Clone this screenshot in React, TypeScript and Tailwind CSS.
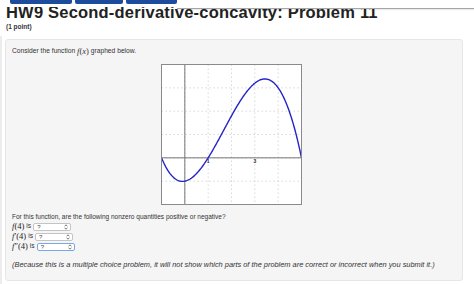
import React from "react";

function Graph() {
  const u = 140 / 6;
  const X = (x: number) => (x + 1) * u;
  const Y = (y: number) => (4 - y) * u;
  const f = (x: number) => -0.2 * (x * x - 1) * (x - 5);
  const pts: string[] = [];
  for (let i = 0; i <= 240; i++) {
    const x = -1 + (6 * i) / 240;
    pts.push(`${i === 0 ? "M" : "L"}${X(x).toFixed(2)},${Y(f(x)).toFixed(2)}`);
  }
  const grid = [1, 2, 3, 4, 5];
  return (
    <svg width="141" height="141" viewBox="-0.5 -0.5 141 141" className="block">
      <rect x="0" y="0" width="140" height="140" fill="#fff" />
      {grid.map((g) => (
        <line key={"v" + g} x1={g * u} y1={0} x2={g * u} y2={140} stroke="#cfcfcf" strokeWidth="0.8" strokeDasharray="1.5 2.5" />
      ))}
      {grid.map((g) => (
        <line key={"h" + g} x1={0} y1={g * u} x2={140} y2={g * u} stroke="#cfcfcf" strokeWidth="0.8" strokeDasharray="1.5 2.5" />
      ))}
      <line x1={X(0)} y1={0} x2={X(0)} y2={140} stroke="#777" strokeWidth="1" />
      <line x1={0} y1={Y(0)} x2={140} y2={Y(0)} stroke="#777" strokeWidth="1" />
      <text x={X(1)} y={Y(0) + 5.5} fontSize="5" fontWeight="bold" textAnchor="middle" fontFamily="Liberation Sans, sans-serif" fill="#333">1</text>
      <text x={X(3)} y={Y(0) + 5.5} fontSize="5" fontWeight="bold" textAnchor="middle" fontFamily="Liberation Sans, sans-serif" fill="#333">3</text>
      <path d={pts.join(" ")} fill="none" stroke="#2424c8" strokeWidth="1.4" />
      <rect x="0" y="0" width="140" height="140" fill="none" stroke="#8a8a8a" strokeWidth="1" />
    </svg>
  );
}

function Select({ focus = false }: { focus?: boolean }) {
  return (
    <span
      className={`inline-flex items-center justify-between h-[8px] w-[38px] bg-white rounded-[2px] pl-[3px] pr-[2px] ml-[2px] border ${
        focus ? "border-[#7aa7e6]" : "border-[#c4c4c4]"
      }`}
    >
      <span className="text-[6px] leading-none text-[#444] font-['Liberation_Sans',sans-serif]">?</span>
      <svg width="4" height="6" viewBox="0 0 4 6">
        <path d="M0.6 2.3 L2 0.8 L3.4 2.3" fill="none" stroke="#555" strokeWidth="0.8" />
        <path d="M0.6 3.7 L2 5.2 L3.4 3.7" fill="none" stroke="#555" strokeWidth="0.8" />
      </svg>
    </span>
  );
}

function MathRow({ label, focus = false }: { label: React.ReactNode; focus?: boolean }) {
  return (
    <div className="flex items-center h-[10px]">
      <span className="font-['Liberation_Serif',serif] text-[8.5px] leading-none text-[#222]">{label}</span>
      <span className="text-[6.7px] leading-none ml-[2px] text-[#333]">is</span>
      <Select focus={focus} />
    </div>
  );
}

export default function App() {
  return (
    <div className="relative w-[474px] h-[284px] overflow-hidden bg-white font-['Liberation_Sans',Arial,sans-serif] text-[#222]">
      {/* top nav overlay */}
      <div className="absolute left-0 top-0 w-full z-10 flex items-start">
        <div className="h-[7px] bg-white pl-[10px] flex gap-[3px] items-start">
          <div className="w-[62px] h-[4px] bg-[#1d4c9c] rounded-b-[2px]" />
          <div className="w-[48px] h-[4px] bg-[#1d4c9c] rounded-b-[2px]" />
          <div className="w-[51px] h-[4px] bg-[#1d4c9c] rounded-b-[2px]" />
        </div>
        <div className="flex-1 h-[9px] bg-white border-b-[1.5px] border-[#a5a5a5] shadow-[0_1px_1px_rgba(0,0,0,0.08)]" />
      </div>

      {/* left edge strip */}
      <div className="absolute left-0 top-[36px] w-[2px] h-[248px] bg-[#ececec]" />

      <div className="pl-[6px] pt-[3.5px]">
        <h1 className="text-[16.5px] leading-[16.5px] font-bold tracking-[0.2px] text-[#222] whitespace-nowrap">
          HW9 Second-derivative-concavity: Problem 11
        </h1>
        <div className="mt-[3px] text-[6.5px] leading-[7px] font-bold text-[#333]">(1 point)</div>
      </div>

      <div className="ml-[5px] mt-[9px] w-[458px] h-[242px] bg-[#f5f5f5] border border-[#e6e6e6] rounded-[3px] pl-[6px] pr-[6px]">
        <div className="mt-[7px] text-[6.7px] leading-[8px] text-[#333] flex items-center">
          <span>Consider the function&nbsp;</span>
          <span className="font-['Liberation_Serif',serif] text-[8.5px] leading-none">
            <i>f</i>(<i>x</i>)
          </span>
          <span>&nbsp;graphed below.</span>
        </div>
        <div className="flex justify-center mt-[8px] -ml-[6px]">
          <Graph />
        </div>
        <div className="mt-[8px] text-[6.5px] leading-[8px] text-[#333] whitespace-nowrap">
          For this function, are the following nonzero quantities positive or negative?
        </div>
        <div className="mt-[1px] flex flex-col">
          <MathRow label={<><i>f</i>(4)</>} />
          <MathRow label={<><i>f</i>′(4)</>} />
          <MathRow label={<><i>f</i>″(4)</>} focus />
        </div>
        <div className="mt-[9px] text-[7.4px] leading-[8px] italic text-[#333] whitespace-nowrap">
          (Because this is a multiple choice problem, it will not show which parts of the problem are correct or incorrect when you submit it.)
        </div>
      </div>
    </div>
  );
}
